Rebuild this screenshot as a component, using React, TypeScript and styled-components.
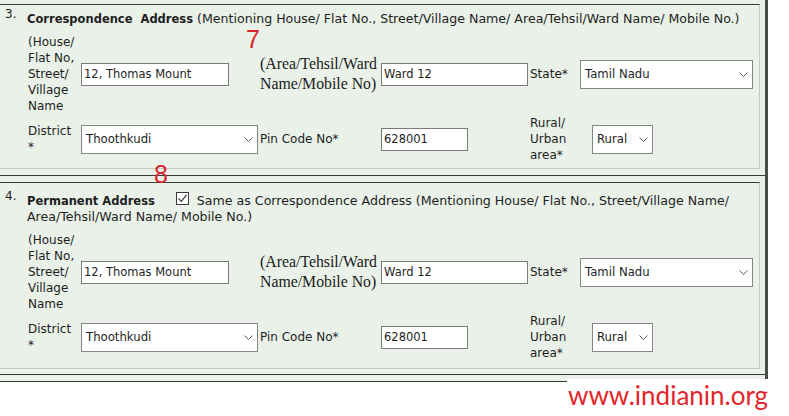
import React from "react";
import styled, { createGlobalStyle } from "styled-components";

const Global = createGlobalStyle`
  html, body { margin: 0; padding: 0; background: #ffffff; }
  body {
    font-family: "DejaVu Sans", Verdana, sans-serif;
    font-size: 12px;
    color: #1e1e1e;
  }
`;

const Page = styled.div`
  position: relative;
  width: 789px;
  height: 416px;
  overflow: hidden;
  background: #ffffff;
`;

const Frame = styled.div`
  width: 765px;
  padding-top: 4px;
  background: #e9f1e9;
  border-right: 3px solid #4a4a4a;
  display: flex;
  flex-direction: column;
`;

const Cell = styled.div<{ $pb: number; $mt?: number }>`
  margin-top: ${(p) => p.$mt ?? 0}px;
  margin-right: 5px;
  border-top: 1px solid #3a3a3a;
  border-right: 1px solid #c3cbc3;
  border-bottom: 1px solid #c3cbc3;
  display: grid;
  grid-template-columns: 27px 1fr;
  padding-bottom: ${(p) => p.$pb}px;
`;

const TableRule = styled.div<{ $mt: number }>`
  margin-top: ${(p) => p.$mt}px;
  height: 1px;
  background: #3a3a3a;
`;

const NextCellTop = styled.div`
  margin-top: 6px;
  margin-right: 5px;
  height: 1px;
  background: #3a3a3a;
`;

const Num = styled.div<{ $pad: number }>`
  padding-left: 5px;
  padding-top: ${(p) => p.$pad - 4}px;
  font-size: 12px;
  line-height: 14px;
`;

const Body = styled.div<{ $pad: number }>`
  padding-top: ${(p) => p.$pad}px;
  display: flex;
  flex-direction: column;
`;

const TitleLine = styled.div`
  display: flex;
  align-items: baseline;
  height: 16px;
  line-height: 16px;
  font-size: 12.6px;
  white-space: pre;
`;

const Bold = styled.span`
  font-weight: bold;
  font-size: 11.5px;
`;

const CheckBox = styled.span`
  display: inline-flex;
  align-items: center;
  justify-content: center;
  align-self: flex-start;
  box-sizing: border-box;
  width: 13px;
  height: 13px;
  margin: -1px 8px 0 21px;
  border: 1px solid #3a3a3a;
  background: #ffffff;
`;

const Fields = styled.div`
  margin-top: 7px;
  padding-left: 1px;
  display: grid;
  grid-template-columns: 53px 179px 121px 149px 50px 1fr;
  grid-template-rows: 80px 48px;
  row-gap: 1px;
  align-items: center;
`;

const Label = styled.div`
  line-height: 16px;
  white-space: nowrap;
`;

const SerifLabel = styled.div`
  font-family: "Liberation Serif", "Times New Roman", serif;
  font-size: 15.8px;
  line-height: 20px;
  white-space: nowrap;
  color: #1a1a1a;
`;

const TextInput = styled.input<{ $w: number }>`
  box-sizing: border-box;
  width: ${(p) => p.$w}px;
  height: 23px;
  margin: 0;
  padding: 0 2px;
  border: 1px solid #7a7a7a;
  border-radius: 0;
  background: #ffffff;
  font-family: "DejaVu Sans", Verdana, sans-serif;
  font-size: 11.5px;
  color: #1e1e1e;
  outline: none;
`;

const SelectBox = styled.div<{ $w: number; $ml?: number }>`
  box-sizing: border-box;
  width: ${(p) => p.$w}px;
  height: 29px;
  margin-left: ${(p) => p.$ml ?? 0}px;
  padding: 0 4px 0 4px;
  border: 1px solid #858585;
  background: #ffffff;
  display: flex;
  align-items: center;
  justify-content: space-between;
  white-space: nowrap;
  font-size: 11.7px;
`;

const Annotation = styled.span<{ $x: number; $y: number }>`
  position: absolute;
  left: ${(p) => p.$x}px;
  top: ${(p) => p.$y}px;
  font-family: "Liberation Sans", Arial, sans-serif;
  font-size: 25px;
  line-height: 1;
  color: #d8262c;
`;

const Watermark = styled.div`
  position: absolute;
  left: 567px;
  top: 379px;
  width: 222px;
  height: 37px;
  box-sizing: border-box;
  padding: 3px 0 0 1px;
  background: #ffffff;
  font-family: Lato, "Open Sans", sans-serif;
  font-size: 26px;
  line-height: 1;
  color: #e3262c;
  white-space: nowrap;
`;

const Chevron = () => (
  <svg width="9" height="5" viewBox="0 0 9 5">
    <path d="M0.5 0.5 L4.5 4.5 L8.5 0.5" stroke="#5a5a5a" strokeWidth="1" fill="none" />
  </svg>
);

const Select: React.FC<{ w: number; ml?: number; value: string }> = ({ w, ml, value }) => (
  <SelectBox $w={w} $ml={ml}>
    <span>{value}</span>
    <Chevron />
  </SelectBox>
);

const AddressFields = () => (
  <Fields>
    <Label>
      (House/<br />Flat No,<br />Street/<br />Village<br />Name
    </Label>
    <TextInput $w={148} readOnly value="12, Thomas Mount" />
    <SerifLabel>
      (Area/Tehsil/Ward<br />Name/Mobile No)
    </SerifLabel>
    <TextInput $w={147} readOnly value="Ward 12" />
    <Label>State*</Label>
    <Select w={173} value="Tamil Nadu" />

    <Label>
      District<br />*
    </Label>
    <Select w={177} value="Thoothkudi" />
    <Label>Pin Code No*</Label>
    <TextInput $w={87} readOnly value="628001" />
    <Label>
      Rural/<br />Urban<br />area*
    </Label>
    <Select w={61} ml={12} value="Rural" />
  </Fields>
);

export default function App() {
  return (
    <Page>
      <Global />
      <Frame>
        <Cell $pb={5}>
          <Num $pad={6}>3.</Num>
          <Body $pad={6}>
            <TitleLine>
              <Bold>Correspondence  Address</Bold>
              <span> (Mentioning House/ Flat No., Street/Village Name/ Area/Tehsil/Ward Name/ Mobile No.)</span>
            </TitleLine>
            <AddressFields />
          </Body>
        </Cell>
        <TableRule $mt={6} />
        <Cell $pb={7} $mt={6}>
          <Num $pad={10}>4.</Num>
          <Body $pad={10}>
            <TitleLine>
              <Bold>Permanent Address</Bold>
              <CheckBox>
                <svg width="11" height="11" viewBox="0 0 11 11">
                  <polyline points="1.5,5.5 4.3,8.3 9.5,2" stroke="#3a3a3a" strokeWidth="1.2" fill="none" />
                </svg>
              </CheckBox>
              <span>Same as Correspondence Address (Mentioning House/ Flat No., Street/Village Name/</span>
            </TitleLine>
            <TitleLine>Area/Tehsil/Ward Name/ Mobile No.)</TitleLine>
            <AddressFields />
          </Body>
        </Cell>
        <TableRule $mt={5} />
        <NextCellTop />
      </Frame>
      <Annotation $x={246} $y={27}>7</Annotation>
      <Annotation $x={154} $y={162}>8</Annotation>
      <Watermark>www.indianin.org</Watermark>
    </Page>
  );
}
